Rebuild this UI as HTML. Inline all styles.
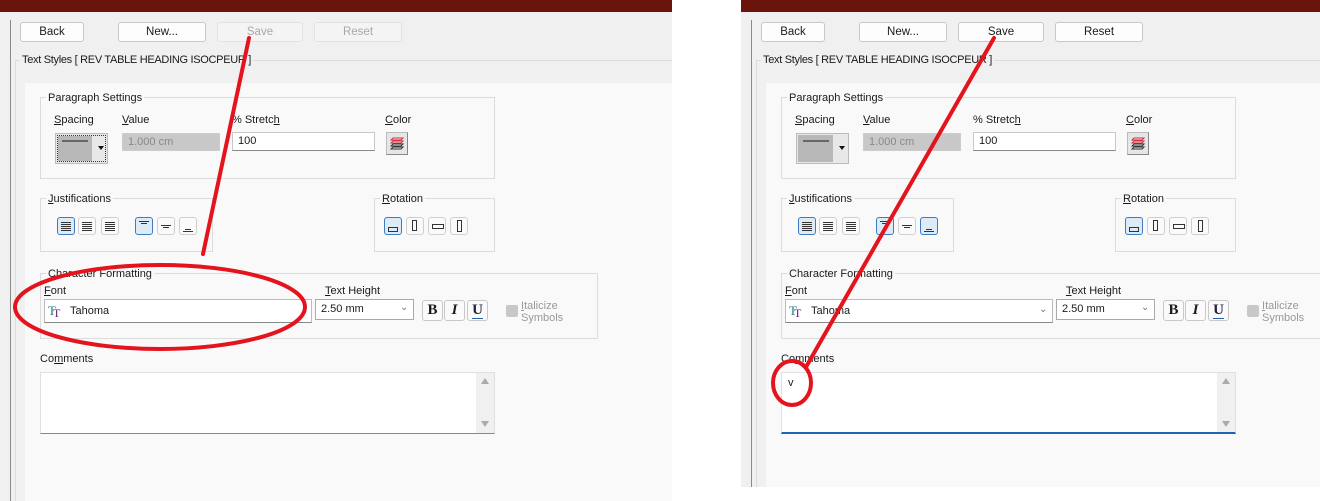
<!DOCTYPE html>
<html><head><meta charset="utf-8"><style>
*{box-sizing:border-box;margin:0;padding:0}
body{width:1320px;height:501px;background:#fff;position:relative;overflow:hidden;font-family:"Liberation Sans",sans-serif;font-size:11px;color:#1a1a1a}
.panel{position:absolute;top:0;background:#f0f0f0;overflow:hidden}
.a{position:absolute}
.bar{left:0;top:0;right:0;height:12px;background:#6b140b}
.btn{position:absolute;top:22px;height:20px;background:#fdfdfd;border:1px solid #c8c8c8;border-radius:3px;text-align:center;line-height:18px;font-size:11.5px}
.dis{background:#f4f4f4;border-color:#e2e2e2;color:#a8a8a8}
.grp{position:absolute;border:1px solid #dcdcdc}
.lg{position:absolute;background:#f9f9f9;padding:0 2px;line-height:12px}
.lbl{position:absolute;line-height:12px}
.field{position:absolute;border:1px solid #c8c8c8;background:#fff;padding-left:5px;line-height:17px}
.tb{position:absolute;top:217px;width:18px;height:18px;border:1px solid #cfcfcf;border-radius:3px;background:#fafafa}
.tb.on{background:#dcebf7;border-color:#3d7cc0}
.ln{position:absolute;height:1px;background:#333;left:3px}
.fb{position:absolute;top:300px;width:21px;height:21px;border:1px solid #c8c8c8;border-radius:3px;background:#fafafa;text-align:center;font-family:"Liberation Serif",serif;font-size:15px;line-height:19px;font-weight:bold}
u{text-decoration:underline}
.ts{letter-spacing:-0.3px}
</style></head><body>

<!-- LEFT PANEL -->
<div class="panel" style="left:0;width:672px;height:501px">
 <div class="a bar"></div>
 <div class="a" style="left:10px;top:20px;width:1px;height:481px;background:#8a8a8a"></div>
 <div class="btn" style="left:20px;width:64px">Back</div>
 <div class="btn" style="left:118px;width:88px">New...</div>
 <div class="btn dis" style="left:217px;width:86px">Save</div>
 <div class="btn dis" style="left:314px;width:88px">Reset</div>
 <div class="a" style="left:15px;top:60px;right:0;height:1px;background:#dcdcdc"></div>
 <div class="a" style="left:15px;top:60px;width:1px;height:441px;background:#dcdcdc"></div>
 <div class="a" style="left:25px;top:83px;right:0;bottom:0;background:#f9f9f9"></div>
 <div class="lbl ts" style="left:20px;top:54px;background:#f0f0f0;padding:0 2px">Text Styles [ REV TABLE HEADING ISOCPEUR ]</div>

 <div class="grp" style="left:40px;top:97px;width:455px;height:82px"></div>
 <div class="lg" style="left:46px;top:92px">Paragraph Settings</div>
 <div class="lbl" style="left:54px;top:114px"><u>S</u>pacing</div>
 <div class="lbl" style="left:122px;top:114px"><u>V</u>alue</div>
 <div class="lbl" style="left:232px;top:114px">% Stretc<u>h</u></div>
 <div class="lbl" style="left:385px;top:114px"><u>C</u>olor</div>
 <div class="a" style="left:55px;top:133px;width:53px;height:31px;background:#e8e8e8;border:1px solid #bbb"></div>
 <div class="a" style="left:57px;top:135px;width:49px;height:27px;border:1px dotted #333"></div>
 <div class="a" style="left:58px;top:136px;width:34px;height:25px;background:#b8b8b8"></div>
 <div class="a" style="left:62px;top:140px;width:26px;height:2px;background:#666"></div>
 <div class="a" style="left:98px;top:146px;width:0;height:0;border-left:3px solid transparent;border-right:3px solid transparent;border-top:4px solid #111"></div>
 <div class="field" style="left:122px;top:133px;width:98px;height:18px;background:#c8c8c8;border-color:#ccc;color:#888">1.000 cm</div>
 <div class="field" style="left:232px;top:132px;width:143px;height:19px;border-bottom-color:#888">100</div>
 <div class="a" style="left:386px;top:132px;width:22px;height:23px;background:#e6e6e6;border:1px solid #bbb;border-right-color:#888;border-bottom-color:#888"></div>
 <svg class="a" style="left:389px;top:136px" width="16" height="14"><path d="M2 4h10l2-2H4z" fill="none" stroke="#d03040"/><path d="M2 7h10l2-2H4z" fill="none" stroke="#d03040"/><path d="M2 10h10l2-2H4z" fill="none" stroke="#333"/><path d="M2 13h10l2-2H4z" fill="none" stroke="#333"/></svg>

 <div class="grp" style="left:40px;top:198px;width:173px;height:54px"></div>
 <div class="lg" style="left:46px;top:193px"><u>J</u>ustifications</div>
 <div class="tb on" style="left:57px"><div class="ln" style="top:4px;width:10px"></div><div class="ln" style="top:6px;width:10px"></div><div class="ln" style="top:8px;width:10px"></div><div class="ln" style="top:10px;width:10px"></div><div class="ln" style="top:12px;width:10px"></div></div>
 <div class="tb" style="left:78px"><div class="ln" style="top:4px;width:10px"></div><div class="ln" style="top:6px;width:10px"></div><div class="ln" style="top:8px;width:10px"></div><div class="ln" style="top:10px;width:10px"></div><div class="ln" style="top:12px;width:10px"></div></div>
 <div class="tb" style="left:101px"><div class="ln" style="top:4px;width:10px"></div><div class="ln" style="top:6px;width:10px"></div><div class="ln" style="top:8px;width:10px"></div><div class="ln" style="top:10px;width:10px"></div><div class="ln" style="top:12px;width:10px"></div></div>
 <div class="tb on" style="left:135px"><div class="ln" style="top:3px;width:10px"></div><div class="ln" style="top:5px;left:5px;width:6px"></div></div>
 <div class="tb" style="left:157px"><div class="ln" style="top:7px;width:10px"></div><div class="ln" style="top:9px;left:5px;width:6px"></div></div>
 <div class="tb" style="left:179px"><div class="ln" style="top:11px;left:5px;width:6px"></div><div class="ln" style="top:13px;width:10px"></div></div>

 <div class="grp" style="left:374px;top:198px;width:121px;height:54px"></div>
 <div class="lg" style="left:380px;top:193px"><u>R</u>otation</div>
 <div class="tb on" style="left:384px"><div class="a" style="left:3px;top:9px;width:10px;height:5px;border:1px solid #333"></div></div>
 <div class="tb" style="left:406px"><div class="a" style="left:5px;top:2px;width:5px;height:11px;border:1px solid #333"></div></div>
 <div class="tb" style="left:428px"><div class="a" style="left:3px;top:6px;width:12px;height:5px;border:1px solid #333"></div></div>
 <div class="tb" style="left:450px"><div class="a" style="left:6px;top:2px;width:5px;height:12px;border:1px solid #333"></div></div>

 <div class="grp" style="left:40px;top:273px;width:558px;height:66px"></div>
 <div class="lg" style="left:46px;top:268px">Character Formatting</div>
 <div class="lbl" style="left:44px;top:285px"><u>F</u>ont</div>
 <div class="lbl" style="left:325px;top:285px"><u>T</u>ext Height</div>
 <div class="field" style="left:44px;top:299px;width:268px;height:24px;line-height:22px;padding-left:25px;border-color:#bbb;border-bottom-color:#888">Tahoma</div>
 <div class="a" style="left:48px;top:303px;font-family:'Liberation Serif',serif;font-size:13px;color:#1f7d7d">T</div><div class="a" style="left:53px;top:306px;font-family:'Liberation Serif',serif;font-size:12px;color:#6a1a7a">T</div>
 <div class="field" style="left:315px;top:299px;width:99px;height:21px;line-height:19px;border-color:#aaa">2.50 mm</div>
 <div class="a" style="left:400px;top:302px;color:#777;font-size:10px">&#8964;</div>
 <div class="fb" style="left:422px">B</div>
 <div class="fb" style="left:444px;font-style:italic">I</div>
 <div class="fb" style="left:467px;color:#224;"><span style="border-bottom:1px solid #2a5ea8">U</span></div>
 <div class="a" style="left:506px;top:305px;width:12px;height:12px;background:#c8c8c8;border-radius:2px"></div>
 <div class="lbl" style="left:521px;top:300px;color:#999"><u>I</u>talicize<br>Symbols</div>

 <div class="lbl" style="left:40px;top:353px">Co<u>m</u>ments</div>
 <div class="a" style="left:40px;top:372px;width:455px;height:62px;background:#fff;border:1px solid #e0e0e0;border-bottom:1px solid #888"></div>
 <div class="a" style="left:476px;top:373px;width:18px;height:60px;background:#f0f0f0"></div>
 <div class="a" style="left:481px;top:378px;border-left:4px solid transparent;border-right:4px solid transparent;border-bottom:6px solid #aaa"></div>
 <div class="a" style="left:481px;top:421px;border-left:4px solid transparent;border-right:4px solid transparent;border-top:6px solid #aaa"></div>
</div>

<!-- RIGHT PANEL -->
<div class="panel" style="left:741px;width:579px;height:487px">
 <div class="a bar"></div>
 <div class="a" style="left:10px;top:20px;width:1px;height:481px;background:#8a8a8a"></div>
 <div class="btn" style="left:20px;width:64px">Back</div>
 <div class="btn" style="left:118px;width:88px">New...</div>
 <div class="btn" style="left:217px;width:86px">Save</div>
 <div class="btn" style="left:314px;width:88px">Reset</div>
 <div class="a" style="left:15px;top:60px;right:0;height:1px;background:#dcdcdc"></div>
 <div class="a" style="left:15px;top:60px;width:1px;height:441px;background:#dcdcdc"></div>
 <div class="a" style="left:25px;top:83px;right:0;bottom:0;background:#f9f9f9"></div>
 <div class="lbl ts" style="left:20px;top:54px;background:#f0f0f0;padding:0 2px">Text Styles [ REV TABLE HEADING ISOCPEUR ]</div>

 <div class="grp" style="left:40px;top:97px;width:455px;height:82px"></div>
 <div class="lg" style="left:46px;top:92px">Paragraph Settings</div>
 <div class="lbl" style="left:54px;top:114px"><u>S</u>pacing</div>
 <div class="lbl" style="left:122px;top:114px"><u>V</u>alue</div>
 <div class="lbl" style="left:232px;top:114px">% Stretc<u>h</u></div>
 <div class="lbl" style="left:385px;top:114px"><u>C</u>olor</div>
 <div class="a" style="left:55px;top:133px;width:53px;height:31px;background:#e8e8e8;border:1px solid #bbb"></div>
 <div class="a" style="left:57px;top:135px;width:35px;height:27px;background:#b8b8b8"></div>
 <div class="a" style="left:62px;top:140px;width:26px;height:2px;background:#666"></div>
 <div class="a" style="left:98px;top:146px;width:0;height:0;border-left:3px solid transparent;border-right:3px solid transparent;border-top:4px solid #111"></div>
 <div class="field" style="left:122px;top:133px;width:98px;height:18px;background:#c8c8c8;border-color:#ccc;color:#888">1.000 cm</div>
 <div class="field" style="left:232px;top:132px;width:143px;height:19px;border-bottom-color:#888">100</div>
 <div class="a" style="left:386px;top:132px;width:22px;height:23px;background:#e6e6e6;border:1px solid #bbb;border-right-color:#888;border-bottom-color:#888"></div>
 <svg class="a" style="left:389px;top:136px" width="16" height="14"><path d="M2 4h10l2-2H4z" fill="none" stroke="#d03040"/><path d="M2 7h10l2-2H4z" fill="none" stroke="#d03040"/><path d="M2 10h10l2-2H4z" fill="none" stroke="#333"/><path d="M2 13h10l2-2H4z" fill="none" stroke="#333"/></svg>

 <div class="grp" style="left:40px;top:198px;width:173px;height:54px"></div>
 <div class="lg" style="left:46px;top:193px"><u>J</u>ustifications</div>
 <div class="tb on" style="left:57px"><div class="ln" style="top:4px;width:10px"></div><div class="ln" style="top:6px;width:10px"></div><div class="ln" style="top:8px;width:10px"></div><div class="ln" style="top:10px;width:10px"></div><div class="ln" style="top:12px;width:10px"></div></div>
 <div class="tb" style="left:78px"><div class="ln" style="top:4px;width:10px"></div><div class="ln" style="top:6px;width:10px"></div><div class="ln" style="top:8px;width:10px"></div><div class="ln" style="top:10px;width:10px"></div><div class="ln" style="top:12px;width:10px"></div></div>
 <div class="tb" style="left:101px"><div class="ln" style="top:4px;width:10px"></div><div class="ln" style="top:6px;width:10px"></div><div class="ln" style="top:8px;width:10px"></div><div class="ln" style="top:10px;width:10px"></div><div class="ln" style="top:12px;width:10px"></div></div>
 <div class="tb on" style="left:135px"><div class="ln" style="top:3px;width:10px"></div><div class="ln" style="top:5px;left:5px;width:6px"></div></div>
 <div class="tb" style="left:157px"><div class="ln" style="top:7px;width:10px"></div><div class="ln" style="top:9px;left:5px;width:6px"></div></div>
 <div class="tb on" style="left:179px"><div class="ln" style="top:11px;left:5px;width:6px"></div><div class="ln" style="top:13px;width:10px"></div></div>

 <div class="grp" style="left:374px;top:198px;width:121px;height:54px"></div>
 <div class="lg" style="left:380px;top:193px"><u>R</u>otation</div>
 <div class="tb on" style="left:384px"><div class="a" style="left:3px;top:9px;width:10px;height:5px;border:1px solid #333"></div></div>
 <div class="tb" style="left:406px"><div class="a" style="left:5px;top:2px;width:5px;height:11px;border:1px solid #333"></div></div>
 <div class="tb" style="left:428px"><div class="a" style="left:3px;top:6px;width:12px;height:5px;border:1px solid #333"></div></div>
 <div class="tb" style="left:450px"><div class="a" style="left:6px;top:2px;width:5px;height:12px;border:1px solid #333"></div></div>

 <div class="grp" style="left:40px;top:273px;width:558px;height:66px"></div>
 <div class="lg" style="left:46px;top:268px">Character Formatting</div>
 <div class="lbl" style="left:44px;top:285px"><u>F</u>ont</div>
 <div class="lbl" style="left:325px;top:285px"><u>T</u>ext Height</div>
 <div class="field" style="left:44px;top:299px;width:268px;height:24px;line-height:22px;padding-left:25px;border-color:#bbb;border-bottom-color:#888">Tahoma</div>
 <div class="a" style="left:298px;top:304px;color:#777;font-size:10px">&#8964;</div>
 <div class="a" style="left:48px;top:303px;font-family:'Liberation Serif',serif;font-size:13px;color:#1f7d7d">T</div><div class="a" style="left:53px;top:306px;font-family:'Liberation Serif',serif;font-size:12px;color:#6a1a7a">T</div>
 <div class="field" style="left:315px;top:299px;width:99px;height:21px;line-height:19px;border-color:#aaa">2.50 mm</div>
 <div class="a" style="left:400px;top:302px;color:#777;font-size:10px">&#8964;</div>
 <div class="fb" style="left:422px">B</div>
 <div class="fb" style="left:444px;font-style:italic">I</div>
 <div class="fb" style="left:467px;color:#224;"><span style="border-bottom:1px solid #2a5ea8">U</span></div>
 <div class="a" style="left:506px;top:305px;width:12px;height:12px;background:#c8c8c8;border-radius:2px"></div>
 <div class="lbl" style="left:521px;top:300px;color:#999"><u>I</u>talicize<br>Symbols</div>

 <div class="lbl" style="left:40px;top:353px">Co<u>m</u>ments</div>
 <div class="a" style="left:40px;top:372px;width:455px;height:62px;background:#fff;border:1px solid #e0e0e0;border-bottom:2px solid #1a64b4"></div>
 <div class="lbl" style="left:47px;top:377px">v</div>
 <div class="a" style="left:476px;top:373px;width:18px;height:59px;background:#f0f0f0"></div>
 <div class="a" style="left:481px;top:378px;border-left:4px solid transparent;border-right:4px solid transparent;border-bottom:6px solid #aaa"></div>
 <div class="a" style="left:481px;top:421px;border-left:4px solid transparent;border-right:4px solid transparent;border-top:6px solid #aaa"></div>
</div>

<!-- annotations -->
<svg class="a" style="left:0;top:0" width="1320" height="501">
 <g fill="none" stroke="#e3141e" stroke-width="4" stroke-linecap="round">
  <line x1="249" y1="38" x2="203" y2="254"/>
  <ellipse cx="160" cy="307" rx="145" ry="42"/>
  <line x1="994" y1="38" x2="806" y2="367"/>
  <ellipse cx="792" cy="383" rx="19" ry="22"/>
 </g>
</svg>
</body></html>
